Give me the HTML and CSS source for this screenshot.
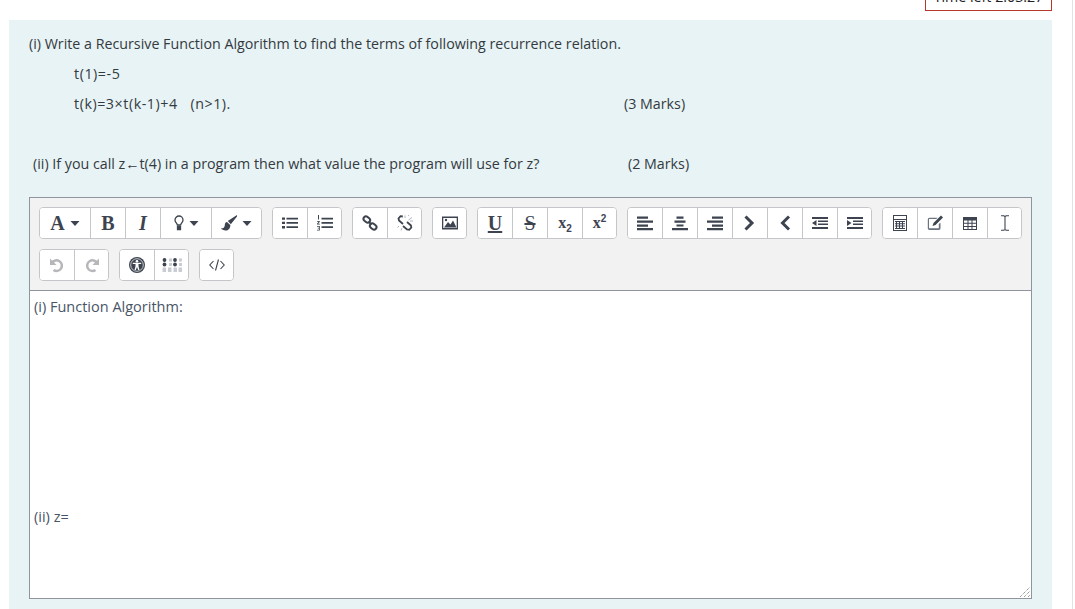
FILE: index.html
```html
<!DOCTYPE html>
<html lang="en">
<head>
<meta charset="utf-8">
<title>Question</title>
<link rel="stylesheet" href="styles.css">
</head>
<body>
<div class="shell">
<main class="page">
  <div class="timer-bar"><div class="timer"><span>Time left 2:03:27</span></div></div>
  <section class="panel">
    <p class="line first">(i) Write a Recursive Function Algorithm to find the terms of following recurrence relation.</p>
    <p class="line indent math">t(1)=-5</p>
    <div class="line row indent"><span class="formula math">t(k)=3×t(k-1)+4 &nbsp; (n&gt;1).</span><span class="marks-a">(3 Marks)</span></div>
    <div class="line row second"><span class="q2">(ii) If you call z<span class="arrow">←</span>t(4) in a program then what value the program will use for z?</span><span class="marks-b">(2 Marks)</span></div>
    <div class="editor">
      <div class="toolbar">
        <div class="tb-row">
        <div class="group">
          <button class="btn wide"><span class="serif">A</span><svg class="caret" viewBox="0 0 9 5"><path d="M0 0h9L4.500 5z"/></svg></button>
          <button class="btn"><span class="serif">B</span></button>
          <button class="btn"><span class="serif italic">I</span></button>
          <button class="btn wide"><svg class="ic ic-s bulb" viewBox="0 0 10 16" stroke="#3d4450" stroke-width="1.300"><path d="M3.400 10C3 8 1 7.500 1 5a4 4 0 0 1 8 0c0 2.500-2 3-2.400 5z"/><path d="M3.500 11.500h3v3h-3z" fill="#3d4450"/></svg><svg class="caret" viewBox="0 0 9 5"><path d="M0 0h9L4.500 5z"/></svg></button>
          <button class="btn wide"><svg class="ic" viewBox="0 0 16 16"><path d="M16 0 6.800 6l3 3.200L16 1.500zM6 7C3 7.200 4.500 11 3 12.500c-.7.700-2 .8-3 .8C1.500 15.800 6.200 16.500 8.300 13.700c1.300-1.800 1-3.700 1-3.700z"/></svg><svg class="caret" viewBox="0 0 9 5"><path d="M0 0h9L4.500 5z"/></svg></button>
        </div>
        <div class="group">
          <button class="btn"><svg class="ic" viewBox="0 0 16 16"><path d="M0 2.500h3v2.300H0zM0 6.800h3v2.300H0zM0 11.100h3v2.300H0zM4.500 2.800H16v1.800H4.500zM4.500 7H16v1.800H4.500zM4.500 11.300H16v1.800H4.500z"/></svg></button>
          <button class="btn"><svg class="ic" viewBox="0 0 16 16"><path d="M4.500 2.800H16v1.800H4.500zM4.500 7H16v1.800H4.500zM4.500 11.300H16v1.800H4.500zM1 0h1v4.500H1zM0 6h2.800v.8L1.200 8.800h1.700v.7H0v-.8l1.700-2H0zM0 11h2.800v4.500H0v-.7h2v-1.300H.7v-.7H2v-1.100H0z"/></svg></button>
        </div>
        <div class="group">
          <button class="btn"><svg class="ic ic-s" viewBox="0 0 16 16" stroke="#3d4450" stroke-width="2"><rect x="1.300" y="2" width="7" height="5" rx="2.500" transform="rotate(40 4.800 4.500)"/><rect x="7.700" y="9" width="7" height="5" rx="2.500" transform="rotate(40 11.200 11.500)"/><path d="M6.500 6.800 9.500 9.200"/></svg></button>
          <button class="btn"><svg class="ic ic-s" viewBox="0 0 16 16" stroke="#3d4450" stroke-width="1.800"><path d="M5.800 1.500 3.500 1.200 1.500 3.500 2 5.500 6 9M10 7l4 3.500.3 2-2.100 2.300-2.200-.3L6 11"/><path d="M2 11 .500 12.500M5 13l-1 2.500M11 1 12 .2M11.500 5 15 2.500M13 6h3M8 .500V3" stroke="#aeb4bd" stroke-width="1"/></svg></button>
        </div>
        <div class="group">
          <button class="btn"><svg class="ic" viewBox="0 0 16 16"><path d="M0 1.500h16v13H0zM1.300 3v10h13.400V3z" fill-rule="evenodd"/><path d="M2 12.500 6 7l2.500 2.500L11 5.500l3.500 7z"/><circle cx="4" cy="5" r="1.200"/></svg></button>
        </div>
        <div class="group">
          <button class="btn"><span class="serif under">U</span></button>
          <button class="btn"><span class="serif strike">S</span></button>
          <button class="btn"><span class="serif small">x<sub>2</sub></span></button>
          <button class="btn"><span class="serif small">x<sup>2</sup></span></button>
        </div>
        <div class="group">
          <button class="btn"><svg class="ic" viewBox="0 0 16 16"><path d="M0 1.500h11v2.300H0zM0 5.500h16v2.300H0zM0 9.500h11v2.300H0zM0 13h16v2.200H0z"/></svg></button>
          <button class="btn"><svg class="ic" viewBox="0 0 16 16"><path d="M4.500 1.500h7v2.300h-7zM2.500 5.500h11v2.300h-11zM4.500 9.500h7v2h-7zM0 13h16v2.200H0z"/></svg></button>
          <button class="btn"><svg class="ic" viewBox="0 0 16 16"><path d="M5 1.500h11v2.300H5zM0 5.500h16v2.300H0zM5 9.500h11v2.300H5zM0 13h16v2.200H0z"/></svg></button>
          <button class="btn"><svg class="ic" viewBox="0 0 16 16"><path d="M3.500 1.500 10 8l-6.500 6.500" fill="none" stroke="#3d4450" stroke-width="3"/></svg></button>
          <button class="btn"><svg class="ic" viewBox="0 0 16 16"><path d="M12 1.500 5.500 8l6.500 6.500" fill="none" stroke="#3d4450" stroke-width="3"/></svg></button>
          <button class="btn"><svg class="ic" viewBox="0 0 16 16"><path d="M0 2h16v2H0zM6 5.500h10v1.500H6zM6 8.500h10V10H6zM0 12h16v2H0zM4.500 5v6L0 8z"/></svg></button>
          <button class="btn"><svg class="ic" viewBox="0 0 16 16"><path d="M0 2h16v2H0zM6 5.500h10v1.500H6zM6 8.500h10V10H6zM0 12h16v2H0zM0 5v6l4.500-3z"/></svg></button>
        </div>
        <div class="group">
          <button class="btn"><svg class="ic" viewBox="0 0 16 16"><path fill-rule="evenodd" d="M1 0h14v16H1zM2 1v3h12V1zM2 5v10h12V5z"/><path d="M3 6h10v1H3zM3 8.300h10v1H3zM3 10.600h10v1H3zM3 13h10v1H3zM4 6h1v8H4zM7 6h1v8H7zM10 6h1v8h-1z"/></svg></button>
          <button class="btn"><svg class="ic" viewBox="0 0 16 16"><path fill-rule="evenodd" d="M11.800 9v4.300H2V4h7.300l1.300-1.300H2.500A1.700 1.700 0 0 0 .8 4.500v8.700c0 .9.800 1.700 1.700 1.700h9.300c.9 0 1.700-.8 1.700-1.700V7.700z" fill="#6b7280"/><path d="M14 0.500 16 2.500 8.500 10l-3 1 1-3z"/></svg></button>
          <button class="btn"><svg class="ic" viewBox="0 0 16 16"><path fill-rule="evenodd" d="M1 2h14v13H1zM2 5.500v2.300h3.500V5.500zm4.500 0v2.300h3V5.500zm4 0v2.300H14V5.500zM2 8.800v2.200h3.500V8.800zm4.500 0v2.200h3V8.800zm4 0v2.200H14V8.800zM2 12v2h3.500v-2zm4.500 0v2h3v-2zm4 0v2H14v-2z"/></svg></button>
          <button class="btn"><svg class="ic ic-s" viewBox="0 0 16 16" stroke="#3d4450" stroke-width="1.100"><path d="M4 .800h2.800l1.200.7 1.200-.7H12M8 1.500v13M4 15.200h2.800l1.200-.7 1.200.7H12"/></svg></button>
        </div>
        </div>
        <div class="tb-row">
        <div class="group">
          <button class="btn"><svg class="ic ic-s" viewBox="0 0 16 16" stroke="#b5b7ba" stroke-width="2.500"><path d="M3 6A5.300 5.300 0 1 1 4.500 13"/><path d="M1 1.500v6.500h6.500z" fill="#b5b7ba" stroke="none"/></svg></button>
          <button class="btn"><svg class="ic ic-s" viewBox="0 0 16 16" stroke="#b5b7ba" stroke-width="2.500"><path d="M13 6A5.300 5.300 0 1 0 11.500 13"/><path d="M15 1.500v6.500H8.500z" fill="#b5b7ba" stroke="none"/></svg></button>
        </div>
        <div class="group">
          <button class="btn"><svg class="ic" viewBox="0 0 16 16"><circle cx="8" cy="8" r="8"/><circle cx="8" cy="8" r="6.300" fill="none" stroke="#fff" stroke-width=".7"/><circle cx="8" cy="4.300" r="1.300" fill="#fff"/><path d="M3.800 5.800h8.400v1.200H9.500v2.300l1 3.700H9.200L8 10l-1.200 3H5.500l1-3.700V7H3.800z" fill="#fff"/></svg></button>
          <button class="btn"><svg class="braille" viewBox="0 0 20 14"><g fill="#3d4450"><circle cx="2.500" cy="2" r="1.900"/><circle cx="2.500" cy="6.500" r="1.900"/><circle cx="13" cy="2" r="1.900"/><circle cx="13" cy="6.500" r="1.900"/></g><g fill="#c9ccd2"><path d="M7 .500h3v3H7zM17 .500h3v3h-3zM7 5h3v3H7zM17 5h3v3h-3zM.500 9.500h3.500V14H.500zM6 9.500h3.500V14H6zM11.500 9.500H15V14h-3.500zM16.500 9.500H20V14h-3.500z"/></g></svg></button>
        </div>
        <div class="group">
          <button class="btn"><svg class="ic ic-s" viewBox="0 0 16 16" stroke="#3d4450" stroke-width="1.100"><path d="M4.500 4 .8 8l3.700 4M11.500 4l3.700 4-3.700 4M9.500 2.500l-3 11"/></svg></button>
        </div>
        </div>
      </div>
      <div class="content">
        <p class="answer">(i) Function Algorithm:</p>
        <p class="answer answer-two">(ii) z=</p>
        <svg class="grip" viewBox="0 0 10 10" fill="none" stroke="#777" stroke-width="1"><path d="M0 10 10 0M4 10l6-6M8 10l2-2" stroke-dasharray="1 1"/></svg>
      </div>
    </div>
  </section>
</main>
<div class="scroll-edge"></div>
</div>
</body>
</html>
```

FILE: styles.css
```css
* { box-sizing: border-box; }
html, body { margin: 0; padding: 0; height: 609px; overflow: hidden; background: #fff; }
body { font-family: "Open Sans", "Noto Sans", sans-serif; font-size: 14.25px; color: #343a40; }
.shell { display: flex; height: 609px; }
.page { width: 1072px; padding-left: 9px; padding-right: 20px; flex: none; }
.scroll-edge { width: 3px; border-left: 1px solid #e3e3e3; }
.timer-bar { height: 11px; display: flex; justify-content: flex-end; align-items: flex-end; overflow: hidden; }
.timer { flex: none; width: 127px; height: 28px; border: 1px solid #b8372b; padding-bottom: 5px; display: flex; align-items: flex-end; justify-content: center; line-height: 16px; color: #1d2125; }
.panel { margin-top: 9px; height: 589px; background: #e7f3f5; padding: 0 20px; overflow: hidden; }
.line { margin: 0; height: 30px; line-height: 30px; white-space: nowrap; }
.first { margin-top: 9px; }
.indent { padding-left: 45px; }
.math { letter-spacing: 0.55px; }
.row { display: flex; }
.formula { width: 550px; flex: none; }
.marks-a { flex: none; }
.second { margin-top: 30px; margin-left: 4px; }
.q2 { width: 595px; flex: none; }
.arrow { font-family: "Liberation Sans", sans-serif; }
.editor { margin-top: 18px; height: 402px; border: 1px solid #8f959e; display: flex; flex-direction: column; background: #fff; }
.toolbar { height: 93px; flex: none; background: #f2f2f2; border-bottom: 1px solid #8f959e; padding: 9px 9px 0; display: flex; flex-direction: column; gap: 10px; }
.tb-row { display: flex; gap: 10px; }
.group { display: flex; height: 32px; border: 1px solid #c4c6c9; border-radius: 4px; background: #fff; overflow: hidden; }
.btn { flex: none; width: 35px; height: 30px; padding: 0; margin: 0; border: 0; border-left: 1px solid #c4c6c9; background: #fff; display: flex; align-items: center; justify-content: center; gap: 5px; color: #3d4450; font-family: "Liberation Serif", serif; }
.btn:first-child { border-left: 0; width: 34px; }
.btn:last-child { width: 34px; }
.btn:only-child { width: 33px; }
.btn.wide { width: 51px; }
.btn.wide:first-child, .btn.wide:last-child { width: 50px; }
.ic { width: 16px; height: 16px; fill: #3d4450; flex: none; }
.ic-s { fill: none; }
.bulb { width: 10px; }
.braille { width: 20px; height: 14px; flex: none; }
.caret { width: 10px; height: 5px; fill: #3d4450; flex: none; }
.serif { font-family: "Liberation Serif", serif; font-size: 20px; font-weight: 700; line-height: 1; color: #3d4450; }
.italic { font-style: italic; }
.under { text-decoration: underline; }
.strike { text-decoration: line-through; font-weight: 400; }
.small { font-size: 16px; }
.small sub, .small sup { font-size: 10px; font-family: "Liberation Sans", sans-serif; line-height: 0; }
.content { flex: 1; position: relative; padding: 6px 4px; }
.answer { margin: 0; line-height: 20px; font-size: 14.5px; color: #495567; }
.answer-two { margin-top: 190px; }
.grip { position: absolute; right: 1px; bottom: 1px; width: 10px; height: 10px; }
```
